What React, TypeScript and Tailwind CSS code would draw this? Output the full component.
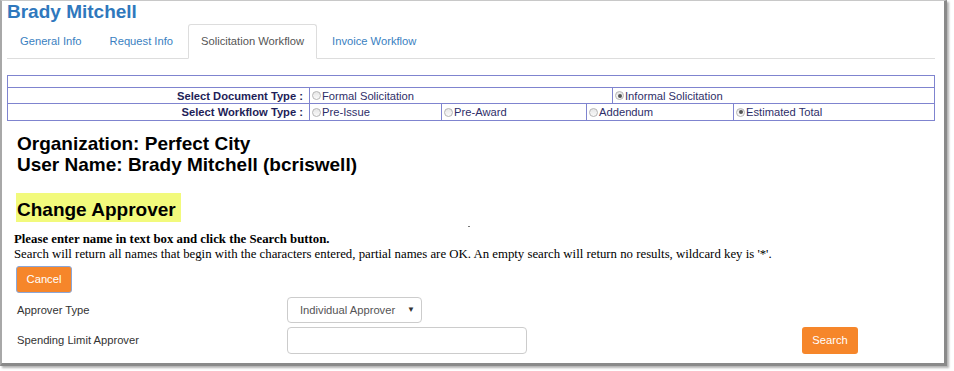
const sans = "font-['Liberation_Sans',Arial,sans-serif]";
const serif = "font-['Liberation_Serif','Times_New_Roman',serif]";

function Radio({ checked, label }: { checked?: boolean; label: string }) {
  return (
    <span className="flex items-center h-full pl-[2px]">
      <span className="flex h-[9px] w-[9px] shrink-0 items-center justify-center rounded-full border border-[#b5b5b5] bg-gradient-to-b from-[#e6e6e6] to-[#fafafa]">
        {checked && <span className="h-[4px] w-[4px] rounded-full bg-[#555]" />}
      </span>
      <span className="ml-px">{label}</span>
    </span>
  );
}

export default function App() {
  const tabs = ["General Info", "Request Info", "Solicitation Workflow", "Invoice Workflow"];
  return (
    <div className={`w-[954px] h-[371px] bg-white ${sans}`}>
      <div className="w-[947px] h-[366px] border-l-2 border-r-[3px] border-b-[3px] border-t border-l-[#a8a8a8] border-r-[#8a8a8a] border-b-[#8a8a8a] border-t-[#c8c8c8] shadow-[2px_2px_2px_rgba(0,0,0,0.3)] pl-[5px]">
        {/* Header */}
        <h1 className="text-[19px] leading-[21px] font-bold text-[#2f78bd]">Brady Mitchell</h1>

        {/* Tabs */}
        <div className="mt-[2px] w-[928px] flex border-b border-[#dddddd]">
          {tabs.map((t) => {
            const active = t === "Solicitation Workflow";
            return (
              <div
                key={t}
                className={
                  active
                    ? "-mb-px mr-[2px] px-3 py-2 text-[11.2px] leading-[16px] text-[#555] bg-white border border-[#dddddd] border-b-white rounded-t-[3px]"
                    : "mr-[2px] px-3 py-2 text-[11.2px] leading-[16px] text-[#3a7fc1] border border-transparent"
                }
              >
                {t}
              </div>
            );
          })}
        </div>

        {/* Document table */}
        <div className="mt-[16px] w-[928px] border border-[#7f84cf] text-[11.2px] text-[#2e2e68]">
          <div className="h-[12px] border-b border-[#7f84cf]" />
          <div className="flex h-[16px] border-b border-[#7f84cf] leading-[16px]">
            <div className="w-[302px] shrink-0 border-r border-[#7f84cf] pr-[6px] text-right font-bold text-[#1e1e58]">
              Select Document Type :
            </div>
            <div className="w-[303px] shrink-0 border-r border-[#7f84cf]">
              <Radio label="Formal Solicitation" />
            </div>
            <div className="flex-1">
              <Radio checked label="Informal Solicitation" />
            </div>
          </div>
          <div className="flex h-[16px] leading-[16px]">
            <div className="w-[302px] shrink-0 border-r border-[#7f84cf] pr-[6px] text-right font-bold text-[#1e1e58]">
              Select Workflow Type :
            </div>
            <div className="w-[132px] shrink-0 border-r border-[#7f84cf]">
              <Radio label="Pre-Issue" />
            </div>
            <div className="w-[145px] shrink-0 border-r border-[#7f84cf]">
              <Radio label="Pre-Award" />
            </div>
            <div className="w-[147px] shrink-0 border-r border-[#7f84cf]">
              <Radio label="Addendum" />
            </div>
            <div className="flex-1">
              <Radio checked label="Estimated Total" />
            </div>
          </div>
        </div>

        {/* Body */}
        <div className="pl-[10px] mt-[12px] text-[19px] leading-[21px] font-bold text-black">
          <div>Organization: Perfect City</div>
          <div>User Name: Brady Mitchell (bcriswell)</div>
        </div>

        <div className="mt-[18px] flex items-end">
          <div className="ml-[9px] h-[29px] pt-[6px] pl-px pr-[5px] bg-[#f2fa7c] text-[19px] leading-[21px] font-bold text-black">
            Change Approver
          </div>
          <span className="ml-[287px] mb-[-5px] h-px w-[2px] bg-[#777]" />
        </div>

        <div className={`mt-[10px] ml-[7px] ${serif} text-[12.8px] leading-[14.5px] text-black`}>
          <div className="font-bold">Please enter name in text box and click the Search button.</div>
          <div>
            Search will return all names that begin with the characters entered, partial names are OK. An empty search will return no results, wildcard key is '*'.
          </div>
        </div>

        <button className="mt-[5px] ml-[9px] flex h-[27px] w-[56px] items-center justify-center rounded-[3px] border border-[#8aa6d8] bg-[#f6862a] text-[11.2px] text-white">
          Cancel
        </button>

        {/* Form */}
        <div className="mt-[4px] ml-[10px] text-[11.2px] text-[#333]">
          <div className="flex items-center">
            <div className="w-[270px] shrink-0">Approver Type</div>
            <div className="flex h-[26px] w-[135px] items-center justify-between rounded-[4px] border border-[#cccccc] pl-[12px] pr-[6px] text-[#555]">
              <span>Individual Approver</span>
              <span className="text-[8px] text-[#333]">▼</span>
            </div>
          </div>
          <div className="mt-[4px] flex items-center">
            <div className="w-[270px] shrink-0">Spending Limit Approver</div>
            <div className="h-[27px] w-[240px] rounded-[4px] border border-[#cccccc]" />
            <button className="ml-[275px] flex h-[27px] w-[56px] items-center justify-center rounded-[3px] bg-[#f6862a] text-[11.2px] text-white">
              Search
            </button>
          </div>
        </div>
      </div>
    </div>
  );
}
